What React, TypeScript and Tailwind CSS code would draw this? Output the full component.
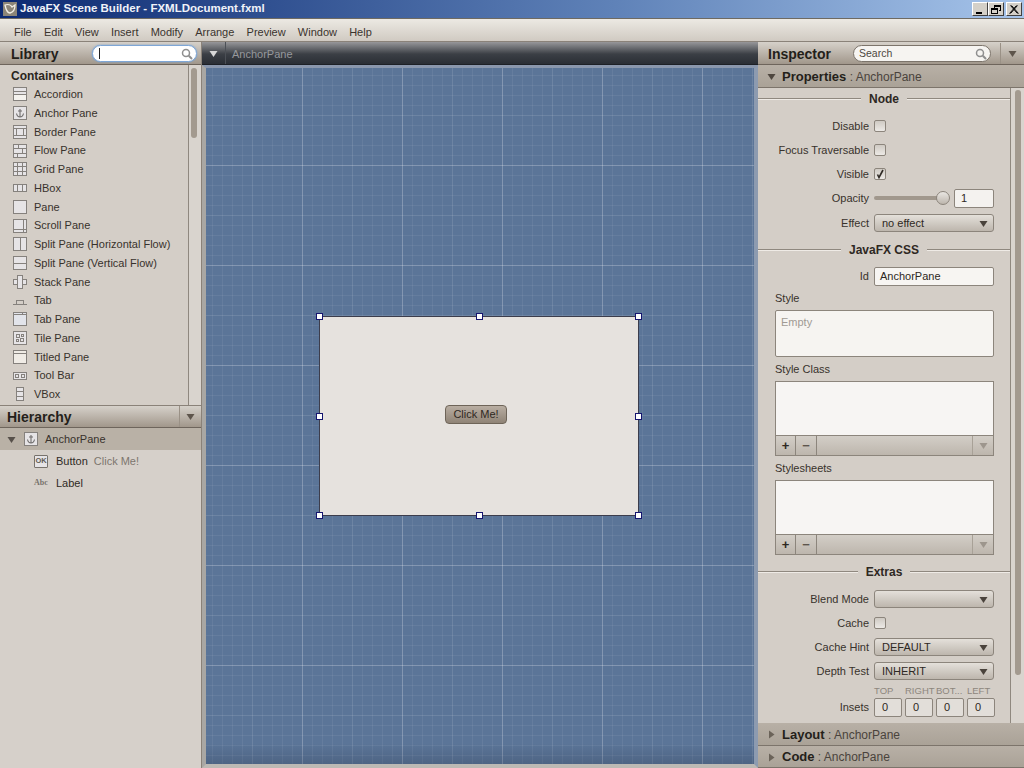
import React from "react";

const font = "font-['Liberation_Sans',sans-serif]";

function Ico({ children }: { children: React.ReactNode }) {
  return (
    <svg width="14" height="14" viewBox="0 0 14 14" className="shrink-0" fill="none" stroke="#85817d" strokeWidth="1" shapeRendering="crispEdges">
      {children}
    </svg>
  );
}

const box = <rect x="0.5" y="0.5" width="13" height="13" fill="#e6e4e6" />;

const anchor = (
  <g shapeRendering="auto" stroke="#6f6d6c" strokeWidth="1.1">
    <path d="M7 3v8M5 5h4M3.5 7.5c.5 2.5 2 3.5 3.5 3.5s3-1 3.5-3.5" />
  </g>
);

const items: [string, React.ReactNode][] = [
  ["Accordion", <Ico>{box}<path d="M0 4.5h14M0 7.5h14" /><rect x="1" y="8" width="12" height="5" fill="#f4f2ee" stroke="none" /></Ico>],
  ["Anchor Pane", <Ico>{box}{anchor}</Ico>],
  ["Border Pane", <Ico>{box}<path d="M0 3.5h14M0 10.5h14M3.5 3.5v7M10.5 3.5v7" /></Ico>],
  ["Flow Pane", <Ico>{box}<path d="M0 4.5h14M0 9.5h14M5.5 0v4M9.5 4v5M4.5 9v5" /></Ico>],
  ["Grid Pane", <Ico>{box}<path d="M0 4.5h14M0 9.5h14M4.5 0v14M9.5 0v14" /></Ico>],
  ["HBox", <Ico><rect x="0.5" y="3.5" width="13" height="7" fill="#e6e4e6" /><path d="M4.5 3v8M9.5 3v8" /></Ico>],
  ["Pane", <Ico>{box}</Ico>],
  ["Scroll Pane", <Ico>{box}<path d="M10.5 1v12M1 10.5h12" /></Ico>],
  ["Split Pane (Horizontal Flow)", <Ico>{box}<path d="M7.5 0v14" /></Ico>],
  ["Split Pane (Vertical Flow)", <Ico>{box}<path d="M0 7.5h14" /></Ico>],
  ["Stack Pane", <Ico><rect x="0.5" y="4.5" width="13" height="5" fill="#e6e4e6" /><rect x="4.5" y="0.5" width="5" height="13" fill="#e6e4e6" /></Ico>],
  ["Tab", <Ico><path d="M0 10.5h14M3.5 10V6.5h7V10" /></Ico>],
  ["Tab Pane", <Ico><rect x="0.5" y="0.5" width="13" height="13" fill="#e2e4ea" /><path d="M0 2.5h14M9.5 0v3" /></Ico>],
  ["Tile Pane", <Ico>{box}<path d="M3.5 3.5h3v3h-3zM8.5 3.5h2v2h-2zM3.5 8.5h2v2h-2zM7.5 7.5h3v3h-3z" /></Ico>],
  ["Titled Pane", <Ico><rect x="0.5" y="0.5" width="13" height="13" fill="#f0ece6" /><path d="M0 3.5h14" /></Ico>],
  ["Tool Bar", <Ico><rect x="0.5" y="3.5" width="13" height="7" fill="#e6e4e6" /><rect x="2.5" y="5.5" width="3" height="3" /><rect x="8.5" y="5.5" width="3" height="3" /></Ico>],
  ["VBox", <Ico><rect x="3.5" y="0.5" width="7" height="13" fill="#e6e4e6" /><path d="M3 4.5h8M3 9.5h8" /></Ico>],
];

function Caret({ dir = "down", color = "#5e554c" }: { dir?: "down" | "right"; color?: string }) {
  return (
    <svg width="9" height="9" viewBox="0 0 9 9" className="shrink-0">
      <path d={dir === "down" ? "M0.5 2h8L4.5 8z" : "M2 0.5v8L7.5 4.5z"} fill={color} />
    </svg>
  );
}

function Lens() {
  return (
    <svg width="12" height="12" viewBox="0 0 12 12" fill="none" stroke="#8f8f8f" strokeWidth="1.5" className="shrink-0">
      <circle cx="5" cy="5" r="3.5" />
      <path d="M7.8 7.8L11 11" strokeWidth="2" />
    </svg>
  );
}

function SectionTitle({ text, h }: { text: string; h: string }) {
  return (
    <div className={`flex items-center ${h}`}>
      <div className="flex-1 h-[2px] border-t border-[#8f887f] bg-[#efebe6]" />
      <span className="px-[8px] text-[12px] font-bold text-[#2e2823]">{text}</span>
      <div className="flex-1 h-[2px] border-t border-[#8f887f] bg-[#efebe6]" />
    </div>
  );
}

function Row({ label, children, h = "h-[24px]" }: { label: string; children: React.ReactNode; h?: string }) {
  return (
    <div className={`flex items-center ${h}`}>
      <span className="w-[111px] text-right text-[11px] text-[#38322c] whitespace-nowrap">{label}</span>
      <div className="ml-[5px] flex items-center">{children}</div>
    </div>
  );
}

function Check({ on }: { on?: boolean }) {
  return (
    <div className="w-[12px] h-[12px] rounded-[2px] border border-[#8c857c] bg-[linear-gradient(#cfcac3,#ece9e5)] flex items-center justify-center">
      {on && (
        <svg width="10" height="10" viewBox="0 0 10 10" fill="none" stroke="#2f2a25" strokeWidth="1.6">
          <path d="M2.5 5.5L4 8.5L8 1" />
        </svg>
      )}
    </div>
  );
}

function Select({ value }: { value?: string }) {
  return (
    <div className="w-[120px] h-[18px] rounded-[3px] border border-[#8c857c] bg-[linear-gradient(#e4e0da,#bdb6ad)] flex items-center justify-between pl-[7px] pr-[5px] text-[11px] text-[#2e2823]">
      <span>{value}</span>
      <Caret color="#4a433c" />
    </div>
  );
}

function ListBox() {
  return (
    <div className="mx-[17px] w-[219px] h-[75px] border border-[#8c857c] flex flex-col bg-[#f7f5f3]">
      <div className="flex-1" />
      <div className="h-[20px] border-t border-[#8c857c] flex items-stretch bg-[linear-gradient(#d3cec7,#bdb6ad)] text-[#2e2823]">
        <div className="w-[20px] border-r border-[#8c857c] flex items-center justify-center text-[13px] font-bold">+</div>
        <div className="w-[21px] border-r border-[#8c857c] flex items-center justify-center text-[13px] font-bold text-[#5d554d]">−</div>
        <div className="flex-1" />
        <div className="w-[21px] border-l border-[#a8a197] flex items-center justify-center">
          <Caret color="#9d968d" />
        </div>
      </div>
    </div>
  );
}

function SubLabel({ text, h }: { text: string; h: string }) {
  return <div className={`pl-[17px] flex items-center text-[11px] text-[#38322c] ${h}`}>{text}</div>;
}

function Inset({ v }: { v: string }) {
  return (
    <div className="w-[28px] h-[19px] rounded-[2px] border border-[#8c857c] bg-[#e2ded9] pl-[7px] flex items-center text-[11px] text-[#2e2823]">
      {v}
    </div>
  );
}

function Accordion({ name, open, h }: { name: string; open?: boolean; h: string }) {
  return (
    <div className={`flex items-center pl-[9px] pt-[1px] border-b border-[#7c746b] bg-[linear-gradient(#b8b0a6,#aaa297)] ${h}`}>
      <Caret dir={open ? "down" : "right"} color={open ? "#4f473f" : "#6b6359"} />
      <b className="ml-[6px] text-[13px] text-[#241f1a]">{name}</b>
      <span className="text-[12px] text-[#4a433c]">&nbsp;: AnchorPane</span>
    </div>
  );
}

function Handle({ pos }: { pos: string }) {
  return <div className={`absolute w-[7px] h-[7px] bg-white border border-[#14146e] ${pos}`} />;
}

export default function App() {
  return (
    <div className={`w-[1024px] h-[768px] overflow-hidden flex flex-col bg-[#d4cec7] ${font}`}>
      {/* window title */}
      <div className="h-[18px] flex items-center bg-[linear-gradient(90deg,#0c2a72,#5f82b8_60%,#a6c4ea)]">
        <svg width="14" height="14" viewBox="0 0 14 14" className="ml-[3px] shrink-0">
          <rect width="14" height="14" fill="#8c8678" />
          <path d="M2 3c3-1 6 0 7 2l3-2c0 3-1 7-5 8-2 0-4-3-5-8z" fill="none" stroke="#f2efe6" strokeWidth="1.3" />
        </svg>
        <span className="ml-[3px] text-[11.5px] font-bold text-[#f0f2f8] whitespace-nowrap">JavaFX Scene Builder - FXMLDocument.fxml</span>
        <div className="ml-auto mr-[2px] flex items-center">
          <WinBtn kind="min" />
          <WinBtn kind="max" />
          <div className="w-[2px]" />
          <WinBtn kind="close" />
        </div>
      </div>

      {/* menu */}
      <div className="h-[24px] flex items-center pl-[14px] pt-[4px] gap-[12.2px] border-t border-[#6e6a62] border-b-[#8a8279] border-b bg-[linear-gradient(#ece9e3,#d0cac2)] text-[11px] text-[#3a342e]">
        {["File", "Edit", "View", "Insert", "Modify", "Arrange", "Preview", "Window", "Help"].map((m) => (
          <span key={m}>{m}</span>
        ))}
      </div>

      <div className="flex-1 flex min-h-0">
        {/* left column */}
        <div className="w-[202px] shrink-0 flex flex-col border-r border-[#8a8279]">
          <div className="h-[23px] flex items-center pl-[11px] pr-[4px] pt-[2px] border-b border-[#6e655c] bg-[linear-gradient(#d6d1ca,#a1978b)]">
            <b className="text-[14px] text-[#241f1a]">Library</b>
            <div className="ml-auto w-[105px] h-[17px] -mt-[1px] rounded-full bg-white border border-[#7ea6d6] shadow-[0_0_2px_#6f9fd8] flex items-center justify-between pl-[6px] pr-[3px]">
              <div className="w-px h-[11px] bg-[#222]" />
              <Lens />
            </div>
          </div>
          <div className="h-[340px] flex bg-[#d4cec7]">
            <div className="flex-1 min-w-0 pl-[11px] pt-[2px]">
              <div className="h-[18px] flex items-center text-[12px] font-bold text-[#2a2520]">Containers</div>
              <div className="flex flex-col">
                {items.map(([name, icon]) => (
                  <div key={name} className="h-[18.75px] flex items-center pl-[2px] text-[11px] text-[#38322c] whitespace-nowrap">
                    {icon}
                    <span className="ml-[7px]">{name}</span>
                  </div>
                ))}
              </div>
            </div>
            <div className="w-[13px] shrink-0 border-l border-[#8f887f] bg-[#d9d4ce] pl-[2px] pt-[3px]">
              <div className="w-[6px] h-[70px] rounded-full bg-[#a39a8f]" />
            </div>
          </div>
          <div className="h-[23px] flex items-center pl-[7px] border-t border-[#8a8279] border-b-[#6e655c] border-b bg-[linear-gradient(#d6d1ca,#a1978b)]">
            <b className="text-[14px] text-[#241f1a] mt-[1px]">Hierarchy</b>
            <div className="ml-auto w-[22px] h-full border-l border-[#9a9186] flex items-center justify-center">
              <Caret />
            </div>
          </div>
          <div className="h-[22px] flex items-center pl-[7px] bg-[#b9b1a6] text-[11px] text-[#38322c]">
            <Caret color="#57504a" />
            <div className="ml-[8px] mr-[7px]"><Ico>{box}{anchor}</Ico></div>
            AnchorPane
          </div>
          <div className="flex-1 bg-[#d6d0ca] text-[11px] text-[#2f2a25]">
            <div className="h-[22px] flex items-center pl-[34px]">
              <div className="w-[14px] h-[13px] rounded-[1px] border border-[#77726c] bg-[#e6e4e6] flex items-center justify-center text-[7.5px] font-bold leading-none text-[#5f5a55]">OK</div>
              <span className="ml-[8px]">Button</span>
              <span className="ml-[6px] text-[#7d766e]">Click Me!</span>
            </div>
            <div className="h-[22px] flex items-center pl-[34px]">
              <span className="w-[14px] text-[8px] font-bold text-[#77726c] font-['Liberation_Serif',serif]">Abc</span>
              <span className="ml-[8px]">Label</span>
            </div>
          </div>
        </div>

        {/* centre */}
        <div className="flex-1 min-w-0 flex flex-col">
          <div className="h-[23px] shrink-0 flex items-center bg-[linear-gradient(#97979a,#3b3f45_55%,#2a2e35)] border-b border-[#1d2026]">
            <div className="w-[24px] h-full border-r border-[#4c5056] flex items-center justify-center">
              <Caret color="#d8d8d8" />
            </div>
            <span className="ml-[6px] mt-[2px] text-[11px] text-[#96989c]">AnchorPane</span>
          </div>
          <div className="flex-1 flex items-center justify-center border-l-[4px] border-r-[4px] border-t-[3px] border-b-[4px] border-l-[#a9a7a3] border-r-[#8d9bb0] border-t-[#8a97ad] border-b-[#bcb9b4] bg-[#5b7598] [background-image:linear-gradient(transparent_97%,rgba(30,40,60,0.22)),linear-gradient(rgba(255,255,255,0.15)_1px,transparent_1px),linear-gradient(90deg,rgba(255,255,255,0.15)_1px,transparent_1px),linear-gradient(rgba(255,255,255,0.05)_1px,transparent_1px),linear-gradient(90deg,rgba(255,255,255,0.05)_1px,transparent_1px),linear-gradient(rgba(255,255,255,0.06)_1px,transparent_1px),linear-gradient(90deg,rgba(255,255,255,0.06)_1px,transparent_1px)] [background-size:100%_100%,100px_100px,100px_100px,50px_50px,50px_50px,10px_10px,10px_10px] [background-position:0_0,0_97px,96px_0,0_47px,46px_0,0_7px,6px_0]">
            <div className="relative w-[320px] h-[200px] ml-[-3px] mt-[-1px] border border-[#3c3d4c] bg-[#e6e2de] flex items-center justify-center">
              <div className="w-[62px] h-[19px] rounded-[4px] border border-[#6e6458] bg-[linear-gradient(#b9aea2,#8f8376)] flex items-center justify-center text-[11px] text-[#2f2822] mt-[-2px] ml-[-5px]">
                Click Me!
              </div>
              <Handle pos="-left-[4px] -top-[4px]" />
              <Handle pos="left-[156px] -top-[4px]" />
              <Handle pos="-right-[4px] -top-[4px]" />
              <Handle pos="-left-[4px] top-[96px]" />
              <Handle pos="-right-[4px] top-[96px]" />
              <Handle pos="-left-[4px] -bottom-[4px]" />
              <Handle pos="left-[156px] -bottom-[4px]" />
              <Handle pos="-right-[4px] -bottom-[4px]" />
            </div>
          </div>
        </div>

        {/* inspector */}
        <div className="w-[266px] shrink-0 flex flex-col">
          <div className="h-[23px] flex items-center pl-[10px] pt-[1px] border-b border-[#6e655c] bg-[linear-gradient(#d6d1ca,#a1978b)]">
            <b className="w-[63px] text-[14px] text-[#241f1a] mt-[1px]">Inspector</b>
            <div className="ml-[22px] w-[138px] h-[17px] rounded-full bg-[#f6f4f1] border border-[#7c746b] flex items-center justify-between pl-[5px] pr-[3px] text-[10.5px] text-[#4d4740]">
              Search
              <Lens />
            </div>
            <div className="ml-auto w-[24px] h-full border-l border-[#9a9186] flex items-center justify-center">
              <Caret />
            </div>
          </div>
          <Accordion name="Properties" open h="h-[23px]" />
          <div className="flex-1 min-h-0 flex">
            <div className="w-[253px] shrink-0 border-r border-[#8f887f]">
              <SectionTitle text="Node" h="h-[22px]" />
              <div className="h-[4px]" />
              <Row label="Disable"><Check /></Row>
              <Row label="Focus Traversable"><Check /></Row>
              <Row label="Visible"><Check on /></Row>
              <Row label="Opacity">
                <div className="relative w-[75px] h-[4px] rounded-full bg-[#a1988d]">
                  <div className="absolute right-[-1px] top-[-5px] w-[14px] h-[14px] rounded-full border border-[#8c857c] bg-[linear-gradient(#e9e6e2,#bdb6ad)]" />
                </div>
                <div className="ml-[5px] w-[40px] h-[19px] rounded-[2px] border border-[#8c857c] bg-[#f4f2ef] pl-[6px] flex items-center text-[11px] text-[#2e2823]">1</div>
              </Row>
              <Row label="Effect" h="h-[26px]"><Select value="no effect" /></Row>
              <SectionTitle text="JavaFX CSS" h="h-[22px] mt-[3px]" />
              <div className="h-[3px]" />
              <Row label="Id">
                <div className="w-[120px] h-[19px] rounded-[2px] border border-[#8c857c] bg-[#f7f5f2] pl-[5px] flex items-center text-[11px] text-[#2e2823]">AnchorPane</div>
              </Row>
              <SubLabel text="Style" h="h-[22px] pb-[1px]" />
              <div className="mx-[17px] w-[219px] h-[47px] rounded-[2px] border border-[#8c857c] bg-[#f6f4f1] pl-[5px] pt-[3px] text-[11px] text-[#a09a94]">Empty</div>
              <SubLabel text="Style Class" h="h-[24px]" />
              <ListBox />
              <SubLabel text="Stylesheets" h="h-[24px]" />
              <ListBox />
              <SectionTitle text="Extras" h="h-[22px] mt-[6px]" />
              <div className="h-[4px]" />
              <Row label="Blend Mode"><Select /></Row>
              <Row label="Cache"><Check /></Row>
              <Row label="Cache Hint"><Select value="DEFAULT" /></Row>
              <Row label="Depth Test"><Select value="INHERIT" /></Row>
              <div className="h-[8px] mt-[4px] ml-[116px] flex text-[9.5px] leading-[8px] text-[#8d867d] whitespace-nowrap">
                <span className="w-[31px]">TOP</span>
                <span className="w-[31px]">RIGHT</span>
                <span className="w-[31px]">BOT...</span>
                <span>LEFT</span>
              </div>
              <Row label="Insets" h="h-[24px]">
                <div className="flex gap-[3px]">
                  <Inset v="0" />
                  <Inset v="0" />
                  <Inset v="0" />
                  <Inset v="0" />
                </div>
              </Row>
            </div>
            <div className="flex-1 bg-[#d9d4ce] pl-[4px] pt-[2px]">
              <div className="w-[6px] h-[585px] rounded-full bg-[#a39a8f]" />
            </div>
          </div>
          <Accordion name="Layout" h="h-[23px]" />
          <Accordion name="Code" h="h-[22px]" />
        </div>
      </div>
    </div>
  );
}

function WinBtn({ kind }: { kind: "min" | "max" | "close" }) {
  return (
    <div className="w-[16px] h-[14px] bg-[#d4d0c8] border-r border-b border-[#404040] border-t border-l border-t-white border-l-white flex items-center justify-center">
      <svg width="10" height="9" viewBox="0 0 10 9" fill="none" stroke="#000" strokeWidth="1" shapeRendering="crispEdges">
        {kind === "min" && <path d="M1 7.5h6M1 8.5h6" />}
        {kind === "max" && <path d="M3.5 2.5v-2h6v5h-2M3.5 1.5h6M0.5 3.5h6v5h-6zM0.5 4.5h6" />}
        {kind === "close" && <path d="M1.5 0.5l7 8M8.5 0.5l-7 8M2.5 0.5l7 8M7.5 0.5l-7 8" shapeRendering="auto" />}
      </svg>
    </div>
  );
}
